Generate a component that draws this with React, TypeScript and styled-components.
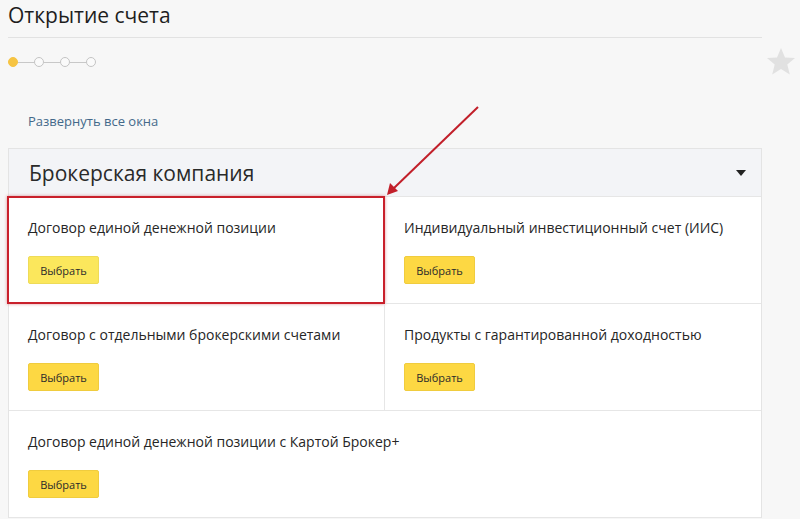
import styled, { createGlobalStyle } from "styled-components"

const GlobalStyle = createGlobalStyle`
    html, body {
        margin: 0;
        background: #f7f7f7;
        font-family: 'Open Sans', 'Liberation Sans', sans-serif;
        color: #222;
    }
`

const Page = styled.div`
    position: relative;
    display: flex;
    width: 800px;
    height: 519px;
    overflow: hidden;
`

const Main = styled.div`
    width: 754px;
    padding-left: 8px;
    display: flex;
    flex-direction: column;
`

const Aside = styled.div`
    flex: 1;
    display: flex;
    justify-content: center;
    padding-top: 47px;
`

const Header = styled.div`
    height: 37px;
    border-bottom: 1px solid #e2e2e2;
`

const Title = styled.h1`
    margin: 0;
    font-size: 21px;
    font-weight: 400;
    line-height: 30px;
    color: #1e1e1e;
`

const Stepper = styled.div`
    display: flex;
    align-items: center;
    margin-top: 19px;
    height: 10px;
`

const Dot = styled.span<{ $active?: boolean }>`
    width: 10px;
    height: 10px;
    box-sizing: border-box;
    border-radius: 50%;
    background: ${p => (p.$active ? "#f6c443" : "#fafafa")};
    border: 1px solid ${p => (p.$active ? "#f6c443" : "#c4c4c4")};
`

const StepLine = styled.span`
    width: 16px;
    height: 1px;
    background: #c8c8c8;
`

const ExpandLink = styled.a`
    margin: 45px 0 0 20px;
    font-size: 13px;
    line-height: 18px;
    color: #44698a;
    text-decoration: none;
    cursor: pointer;
`

const Panel = styled.section`
    margin-top: 18px;
    border: 1px solid #e4e4e4;
    border-bottom: none;
    background: #fff;
`

const PanelHead = styled.div`
    display: flex;
    align-items: center;
    justify-content: space-between;
    height: 47px;
    padding: 0 15px 0 20px;
    background: #f3f4f7;
    border-bottom: 1px solid #e6e6e6;
`

const PanelTitle = styled.h2`
    margin: 0;
    font-size: 21px;
    font-weight: 400;
    color: #2a2a2a;
    padding-top: 1px;
`

const Caret = styled.span`
    width: 0;
    height: 0;
    border-left: 5px solid transparent;
    border-right: 5px solid transparent;
    border-top: 6px solid #222;
`

const Grid = styled.div`
    display: grid;
    grid-template-columns: 376px 1fr;
`

const Cell = styled.div<{ $wide?: boolean }>`
    position: relative;
    grid-column: ${p => (p.$wide ? "1 / span 2" : "auto")};
    height: 106px;
    box-sizing: content-box;
    padding: 0 19px;
    border-bottom: 1px solid #e6e6e6;
    &:nth-child(odd):not(:last-child) {
        border-right: 1px solid #e6e6e6;
        padding-right: 18px;
    }
    display: flex;
    flex-direction: column;
    align-items: flex-start;
`

const CellTitle = styled.div`
    margin-top: 21px;
    font-size: 14px;
    line-height: 20px;
    color: #262626;
`

const SelectButton = styled.button<{ $light?: boolean }>`
    margin-top: 18px;
    width: 71px;
    height: 28px;
    border: 1px solid ${p => (p.$light ? "#eedb58" : "#f0cc3e")};
    border-radius: 2px;
    background: ${p => (p.$light ? "#fbe75c" : "#fdd843")};
    font-family: 'Open Sans', 'Liberation Sans', sans-serif;
    font-size: 11px;
    color: #2b2b2b;
    padding: 0;
    cursor: pointer;
`

const Highlight = styled.div`
    position: absolute;
    left: -2px;
    top: -1px;
    right: -1px;
    bottom: -1px;
    border: 2px solid #c9202b;
    box-shadow: 0 0 3px rgba(190, 20, 30, 0.45);
    pointer-events: none;
`

const ArrowLayer = styled.svg`
    position: absolute;
    left: 0;
    top: 0;
    pointer-events: none;
`

const items = [
    "Договор единой денежной позиции",
    "Индивидуальный инвестиционный счет (ИИС)",
    "Договор с отдельными брокерскими счетами",
    "Продукты с гарантированной доходностью",
    "Договор единой денежной позиции с Картой Брокер+",
]

export default function App() {
    return (
        <>
            <GlobalStyle />
            <Page>
                <Main>
                    <Header>
                        <Title>Открытие счета</Title>
                    </Header>
                    <Stepper>
                        <Dot $active />
                        <StepLine />
                        <Dot />
                        <StepLine />
                        <Dot />
                        <StepLine />
                        <Dot />
                    </Stepper>
                    <ExpandLink>Развернуть все окна</ExpandLink>
                    <Panel>
                        <PanelHead>
                            <PanelTitle>Брокерская компания</PanelTitle>
                            <Caret />
                        </PanelHead>
                        <Grid>
                            {items.map((t, i) => (
                                <Cell key={t} $wide={i === 4}>
                                    <CellTitle>{t}</CellTitle>
                                    <SelectButton $light={i === 0}>Выбрать</SelectButton>
                                    {i === 0 && <Highlight />}
                                </Cell>
                            ))}
                        </Grid>
                    </Panel>
                </Main>
                <Aside>
                    <svg width="30" height="29" viewBox="0 0 30 29">
                        <polygon
                            points="15,1 19,10.5 29,11 21.3,17.6 23.8,27.5 15,22 6.2,27.5 8.7,17.6 1,11 11,10.5"
                            fill="#e1e1e1"
                        />
                    </svg>
                </Aside>
                <ArrowLayer width="800" height="519">
                    <line x1="478" y1="107" x2="393" y2="189" stroke="#c21f2a" strokeWidth="2" />
                    <polygon points="387,195 390,183 398,191" fill="#c21f2a" />
                </ArrowLayer>
            </Page>
        </>
    )
}
